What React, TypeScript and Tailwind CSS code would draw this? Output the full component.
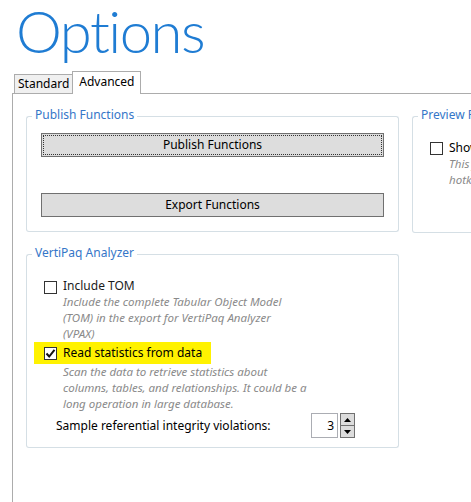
import * as React from "react";

const Check = ({checked, className}:{checked?:boolean; className?:string}) => (
  <span className={"w-[13px] h-[13px] border border-[#333333] bg-white flex items-center justify-center shrink-0 " + (className || "")}>
    {checked ? (
      <svg width="11" height="11" viewBox="0 0 11 11">
        <path d="M1.5 5.5 L4.2 8.5 L9.5 1.8" fill="none" stroke="#111" strokeWidth="2" />
      </svg>
    ) : null}
  </span>
);

// group box: header row draws the top edge around the caption
const Group = ({title, className, bodyClass, children}:{title:string; className?:string; bodyClass?:string; children:React.ReactNode}) => (
  <div className={"shrink-0 flex flex-col " + (className || "")}>
    <div className="flex h-[16px]">
      <div className="w-[6px] h-[7px] self-end border-l border-t border-[#d5dfe5] rounded-tl-[3px]" />
      <span className="px-[3px] text-[12px] leading-[16px] text-[#3576c8] whitespace-nowrap">{title}</span>
      <div className="flex-1 h-[7px] self-end border-r border-t border-[#d5dfe5] rounded-tr-[3px]" />
    </div>
    <div className={"border-l border-r border-b border-[#d5dfe5] rounded-b-[3px] " + (bodyClass || "")}>
      {children}
    </div>
  </div>
);

const Button = ({label, focus}:{label:string; focus?:boolean}) => (
  <div className="h-[24px] border border-[#707070] bg-[#dddddd] p-px">
    <div className={"h-full flex items-center justify-center text-[12px] text-black " + (focus ? "border border-dotted border-[#333]" : "")}>
      {label}
    </div>
  </div>
);

const App = () => {
  return (
    <div className="w-[471px] h-[502px] overflow-hidden bg-white font-['Noto_Sans','Open_Sans',sans-serif] text-black">
      <h1 className="pl-[16px] h-[71px] text-[58px] leading-[61px] tracking-[-1.5px] font-light text-[#1f7cd3] font-['Lato','Open_Sans',sans-serif]">Options</h1>

      {/* tabs */}
      <div className="flex items-end ml-[14px] h-[23px] relative z-10">
        <div className="h-[20px] px-[3px] border border-[#acacac] border-r-0 bg-[#f0f0f0] text-[12px] leading-[18px]">Standard</div>
        <div className="h-[23px] px-[6px] border border-[#acacac] border-b-0 bg-white text-[12px] leading-[19px]">Advanced</div>
      </div>

      <div className="ml-[12px] -mt-px border-l border-t border-[#acacac] h-[420px] pl-[13px] pt-[13px]">
        <div className="flex gap-[13px] items-start">
          <Group title="Publish Functions" className="w-[373px]" bodyClass="px-[14px] pt-[10px] pb-[14px]">
            <div className="flex flex-col gap-[36px]">
              <Button label="Publish Functions" focus />
              <Button label="Export Functions" />
            </div>
          </Group>
          <Group title="Preview Features" className="w-[200px]" bodyClass="pl-[17px] pt-[17px] h-[110px]">
            <div className="flex items-center gap-[6px] text-[12px] leading-[16px]">
              <Check />
              <span className="whitespace-nowrap">Show hotkeys</span>
            </div>
            <div className="pl-[19px] text-[11.5px] leading-[16px] italic text-[#8a8a8a] whitespace-nowrap">
              This feature shows<br />hotkeys in the editor
            </div>
          </Group>
        </div>

        <Group title="VertiPaq Analyzer" className="mt-[12px] w-[373px]" bodyClass="pl-[17px] pt-[17px] pb-[9px]">
          <div className="flex items-start gap-[6px] text-[12px] leading-[16px] text-[#1b1b1b]">
            <Check className="mt-[3px]" />
            <span>Include TOM</span>
          </div>
          <div className="pl-[19px] text-[11.5px] leading-[16px] italic text-[#8a8a8a]">
            Include the complete Tabular Object Model<br />(TOM) in the export for VertiPaq Analyzer<br />(VPAX)
          </div>
          <div className="-ml-[10px] w-fit h-[22px] bg-[#fff200] flex items-center gap-[6px] pl-[10px] pr-[9px] text-[12px] whitespace-nowrap">
            <Check checked />
            <span>Read statistics from data</span>
          </div>
          <div className="pl-[19px] text-[11.5px] leading-[16px] italic text-[#8a8a8a]">
            Scan the data to retrieve statistics about<br />columns, tables, and relationships. It could be a<br />long operation in large database.
          </div>
          <div className="mt-[1px] ml-[12px] flex items-center text-[12px]">
            <span className="w-[255px] whitespace-nowrap">Sample referential integrity violations:</span>
            <div className="w-[27px] h-[25px] border border-[#abadb3] flex items-center justify-end pr-[3px]">3</div>
            <div className="ml-[2px] flex flex-col">
              <div className="w-[15px] h-[13px] border border-[#707070] bg-[#dcdcdc] flex items-center justify-center">
                <svg width="7" height="4" viewBox="0 0 7 4"><path d="M0 4 L3.5 0 L7 4 Z" fill="#000" /></svg>
              </div>
              <div className="w-[15px] h-[12px] border border-t-0 border-[#707070] bg-[#dcdcdc] flex items-center justify-center">
                <svg width="7" height="4" viewBox="0 0 7 4"><path d="M0 0 L7 0 L3.5 4 Z" fill="#000" /></svg>
              </div>
            </div>
          </div>
        </Group>
      </div>
    </div>
  );
};

export default App;
